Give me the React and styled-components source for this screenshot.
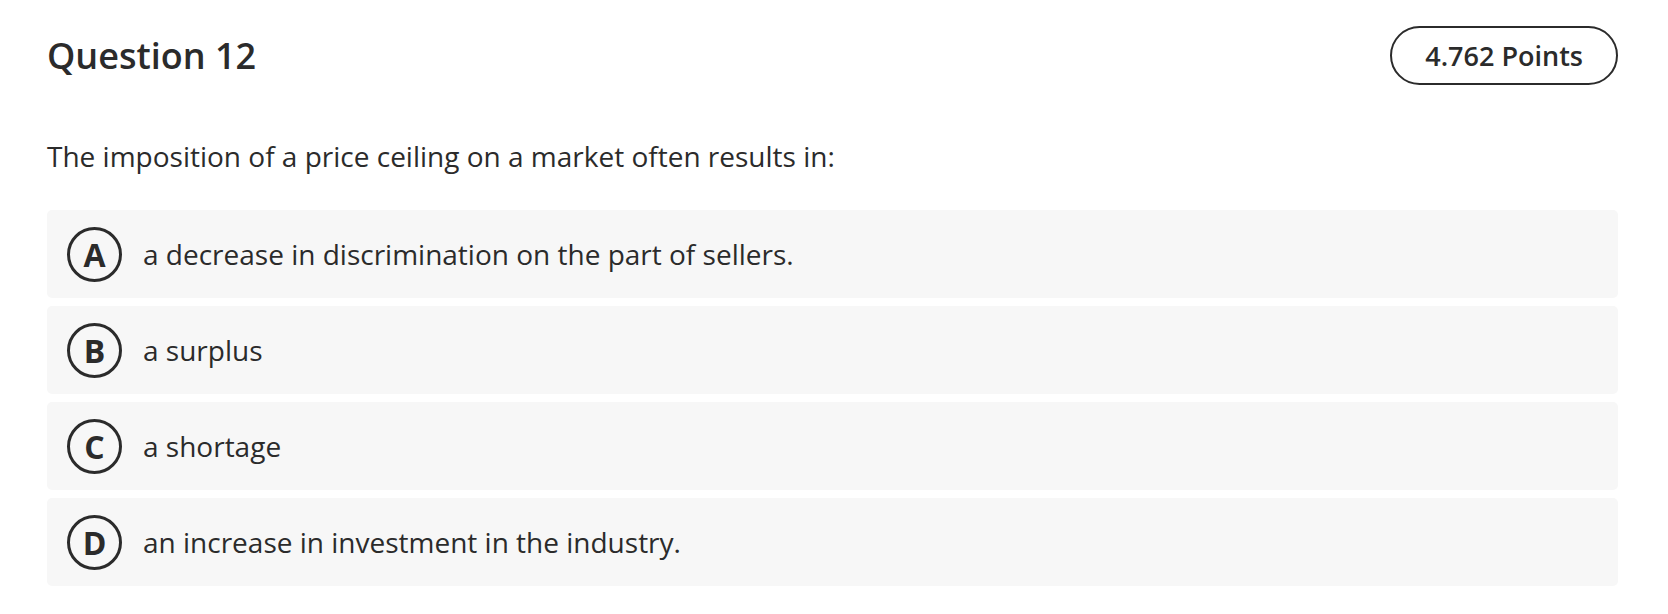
import React from 'react'
import styled, { createGlobalStyle } from 'styled-components'

const Global = createGlobalStyle`
    body {
        margin: 0;
        background: #fff;
        font-family: "Open Sans", "Noto Sans", sans-serif;
        color: #2b2b2b;
    }
`;

const Page = styled.div`
    padding: 26px 50px 0 47px;
`;

const Header = styled.div`
    display: flex;
    align-items: center;
    justify-content: space-between;
`;

const Title = styled.h2`
    margin: 0;
    font-size: 36px;
    font-weight: 600;
`;

const Points = styled.div`
    height: 59px;
    box-sizing: border-box;
    padding: 0 33px;
    border: 2px solid #2b2b2b;
    border-radius: 30px;
    display: flex;
    align-items: center;
    font-size: 27px;
    font-weight: 600;
`;

const Prompt = styled.p`
    margin: 51px 0 34px;
    font-size: 28px;
    line-height: 40px;
`;

const Choices = styled.ul`
    list-style: none;
    margin: 0;
    padding: 0;
    display: flex;
    flex-direction: column;
    gap: 8px;
`;

const Choice = styled.li`
    height: 88px;
    display: flex;
    align-items: center;
    gap: 21px;
    padding-left: 20px;
    background: #f7f7f7;
    border-radius: 5px;
    font-size: 28px;
`;

const Letter = styled.span`
    width: 55px;
    height: 55px;
    box-sizing: border-box;
    border: 3.5px solid #2b2b2b;
    border-radius: 50%;
    display: flex;
    align-items: center;
    justify-content: center;
    font-size: 32px;
    font-weight: 700;
    flex-shrink: 0;
`;

const options = [
    ['A', 'a decrease in discrimination on the part of sellers.'],
    ['B', 'a surplus'],
    ['C', 'a shortage'],
    ['D', 'an increase in investment in the industry.'],
]

const App = () => (
    <Page>
        <Global />
        <Header>
            <Title>Question 12</Title>
            <Points>4.762 Points</Points>
        </Header>
        <Prompt>The imposition of a price ceiling on a market often results in:</Prompt>
        <Choices>
            {options.map(([key, text]) => (
                <Choice key={key}>
                    <Letter>{key}</Letter>
                    {text}
                </Choice>
            ))}
        </Choices>
    </Page>
)

export default App
